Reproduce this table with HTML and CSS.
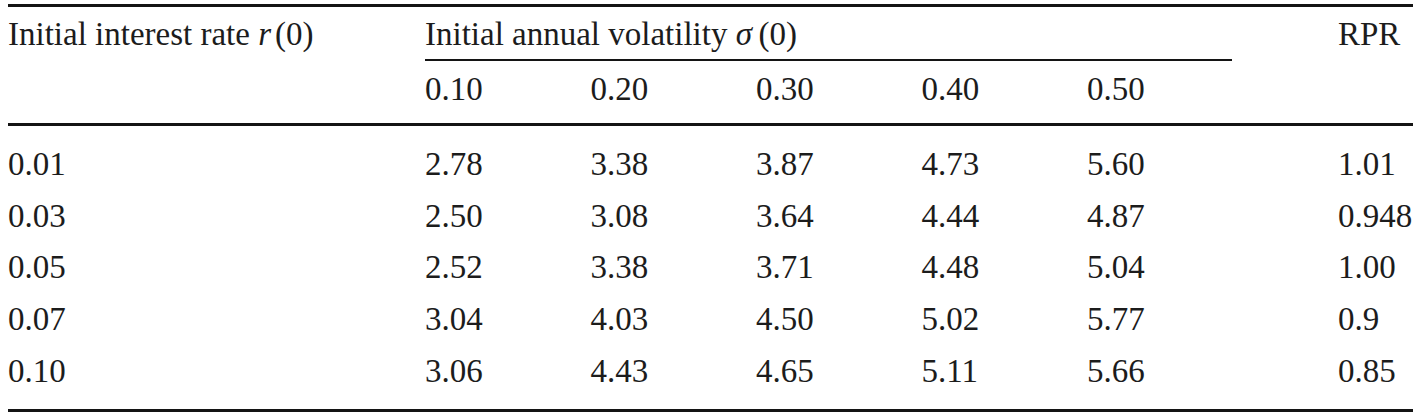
FILE: index.html
```html
<!DOCTYPE html>
<html lang="en">
<head>
<meta charset="utf-8">
<title>Table</title>
<link rel="stylesheet" href="styles.css">
</head>
<body>
<div class="tbl">
  <div class="head">
    <div class="h-stub">Initial interest rate <i class="m">r</i>(0)</div>
    <div class="h-group">Initial annual volatility <i class="m m-wide">σ</i>(0)</div>
    <div class="h-rpr">RPR</div>
    <div class="h-sub">0.10</div>
    <div class="h-sub">0.20</div>
    <div class="h-sub">0.30</div>
    <div class="h-sub">0.40</div>
    <div class="h-sub">0.50</div>
  </div>
  <div class="body">
    <div class="c">0.01</div><div class="c">2.78</div><div class="c">3.38</div><div class="c">3.87</div><div class="c">4.73</div><div class="c">5.60</div><div class="c rpr">1.01</div>
    <div class="c">0.03</div><div class="c">2.50</div><div class="c">3.08</div><div class="c">3.64</div><div class="c">4.44</div><div class="c">4.87</div><div class="c rpr">0.948</div>
    <div class="c">0.05</div><div class="c">2.52</div><div class="c">3.38</div><div class="c">3.71</div><div class="c">4.48</div><div class="c">5.04</div><div class="c rpr">1.00</div>
    <div class="c">0.07</div><div class="c">3.04</div><div class="c">4.03</div><div class="c">4.50</div><div class="c">5.02</div><div class="c">5.77</div><div class="c rpr">0.9</div>
    <div class="c">0.10</div><div class="c">3.06</div><div class="c">4.43</div><div class="c">4.65</div><div class="c">5.11</div><div class="c">5.66</div><div class="c rpr">0.85</div>
  </div>
</div>
</body>
</html>
```

FILE: styles.css
```css
html, body {
  margin: 0;
  padding: 0;
  background: #ffffff;
}

body {
  padding: 4px 0 0 8px;
  font-family: "Liberation Serif", "Times New Roman", serif;
  font-size: 33px;
  line-height: 38px;
  color: #1c1c1c;
}

.tbl {
  width: 1405px;
}

.head,
.body {
  display: grid;
  grid-template-columns: 417px repeat(5, 165.5px) 1fr;
}

.head {
  border-top: 3px solid #141414;
  border-bottom: 3px solid #141414;
}

.m {
  font-style: italic;
  margin-right: 0.12em;
}

.m-wide {
  margin-right: 0.2em;
}

.h-stub {
  grid-column: 1;
  grid-row: 1 / span 2;
  padding-top: 8px;
}

.h-group {
  grid-column: 2 / span 5;
  grid-row: 1;
  padding-top: 8px;
  padding-bottom: 6px;
  margin-right: 20.5px;
  border-bottom: 2px solid #141414;
}

.h-rpr {
  grid-column: 7;
  grid-row: 1 / span 2;
  padding-top: 8px;
  padding-left: 85.5px;
}

.h-sub {
  grid-row: 2;
  padding-top: 9px;
  padding-bottom: 15px;
}

.body {
  row-gap: 13.75px;
  padding-top: 18.8px;
  padding-bottom: 19px;
  border-bottom: 3px solid #141414;
}

.rpr {
  padding-left: 85.5px;
}
```
